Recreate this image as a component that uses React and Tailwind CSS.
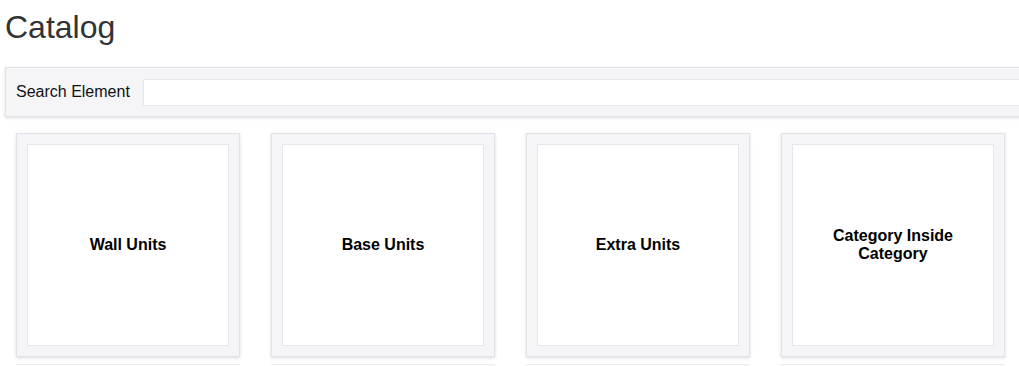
import React from "react";

const cards = ["Wall Units", "Base Units", "Extra Units", "Category Inside Category"];

function Card({ label }) {
  return (
    <div className="w-[224px] h-[224px] shrink-0 bg-[#f5f5f8] border border-[#e2e2e8] shadow-[0_1px_3px_rgba(0,0,0,0.15)] p-[10px]">
      <div className="w-full h-full bg-white border border-[#e6e6ec] flex items-center justify-center px-[22px]">
        <span className="text-[16px] leading-[18px] font-bold text-black text-center">{label}</span>
      </div>
    </div>
  );
}

export default function App() {
  return (
    <div className="w-[1019px] h-[366px] overflow-hidden bg-white font-['Liberation_Sans',Arial,sans-serif]">
      <h1 className="pl-[5px] pt-[9px] text-[32px] leading-[36px] text-[#333] font-normal">Catalog</h1>
      <div className="mt-[22px] ml-[5px] w-[1030px] h-[50px] bg-[#f5f5f8] border border-[#e2e2e8] shadow-[0_1px_3px_rgba(0,0,0,0.15)] flex items-center pl-[10px]">
        <label className="text-[16px] text-[#111] mr-[13px]">Search Element</label>
        <input className="flex-1 h-[27px] bg-white border border-[#e6e6ec] outline-none" />
      </div>
      <div className="flex gap-[31px] pl-[16px] mt-[16px]">
        {cards.map((c) => (
          <Card key={c} label={c} />
        ))}
      </div>
      <div className="flex gap-[31px] pl-[16px] mt-[7px]">
        {cards.map((c) => (
          <div key={c} className="w-[224px] h-[20px] shrink-0 bg-[#fbfbfc] border-t border-[#ececf0]" />
        ))}
      </div>
    </div>
  );
}
